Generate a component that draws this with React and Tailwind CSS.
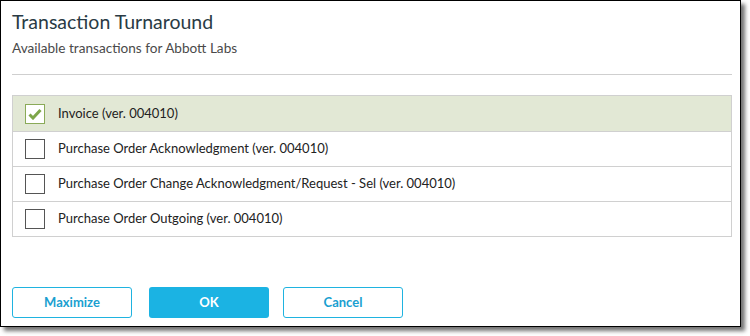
import React from 'react';

const items = [
  { label: 'Invoice (ver. 004010)', checked: true },
  { label: 'Purchase Order Acknowledgment (ver. 004010)', checked: false },
  { label: 'Purchase Order Change Acknowledgment/Request - Sel (ver. 004010)', checked: false },
  { label: 'Purchase Order Outgoing (ver. 004010)', checked: false },
];

const App = () => {
  return (
    <div className="w-[750px] h-[336px] bg-white" style={{ fontFamily: 'Lato, "Open Sans", sans-serif' }}>
      <div className="w-[741px] h-[327px] border border-black bg-white shadow-[4px_4px_4px_rgba(0,0,0,0.55)] flex flex-col pl-[11px] pr-[8px]">
        {/* Header */}
        <div className="pt-[8px]">
          <h1 className="text-[19.5px] leading-[26px] text-[#2a3b45]">Transaction Turnaround</h1>
          <p className="text-[13.6px] leading-[18px] mt-[4px] text-[#4a4a4a]">Available transactions for Abbott Labs</p>
        </div>
        <div className="mt-[17px] border-t border-[#cfcfcf]" />

        {/* List */}
        <div className="mt-[20px] border border-[#d0d0d0]">
          {items.map((item, i) => (
            <div
              key={i}
              className={
                'h-[35px] flex items-center pl-[12px] ' +
                (i > 0 ? 'border-t border-[#d0d0d0] ' : '') +
                (item.checked ? 'bg-[#e2e8d5]' : 'bg-white')
              }
            >
              <div
                className={
                  'w-[20px] h-[20px] border flex items-center justify-center bg-white ' +
                  (item.checked ? 'border-[#8aaa58]' : 'border-[#555]')
                }
              >
                {item.checked && (
                  <svg width="14" height="12" viewBox="0 0 14 12">
                    <path d="M1.5 6.5 L5 10 L12.5 2" fill="none" stroke="#7ea64a" strokeWidth="3" />
                  </svg>
                )}
              </div>
              <span className="ml-[13px] text-[13px] text-[#222]">{item.label}</span>
            </div>
          ))}
        </div>

        {/* Buttons */}
        <div className="mt-auto mb-[8px] flex gap-[17px]">
          <button className="w-[120px] h-[31px] rounded-[3px] border border-[#1fb3e0] text-[#1a9fd0] text-[13px] font-bold bg-white">
            Maximize
          </button>
          <button className="w-[120px] h-[31px] rounded-[3px] bg-[#1bb3e3] text-white text-[13px] font-bold">
            OK
          </button>
          <button className="w-[120px] h-[31px] rounded-[3px] border border-[#1fb3e0] text-[#1a9fd0] text-[13px] font-bold bg-white ml-[-3px]">
            Cancel
          </button>
        </div>
      </div>
    </div>
  );
};

export default App;
